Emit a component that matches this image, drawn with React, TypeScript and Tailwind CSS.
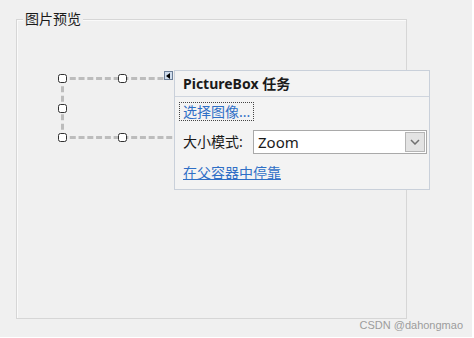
const cjk = { fontFamily: '"Noto Sans", "Noto Sans CJK SC", sans-serif' };

const Handle = ({ x, y }: { x: number; y: number }) => (
  <div
    className="absolute w-[9px] h-[9px] rounded-[2.5px] border-[1.5px] border-[#303030] bg-white"
    style={{ left: x - 4, top: y - 4 }}
  />
);

export default function App() {
  return (
    <div
      className="relative w-[474px] h-[338px] bg-[#f0f0f0] border-r-2 border-b border-white overflow-hidden text-[#1a1a1a]"
      style={cjk}
    >
      {/* group box */}
      <div className="ml-[16px] mt-[19px] w-[391px] h-[300px] border border-[#d6d6d6] shadow-[inset_1px_1px_0_#fafafa]">
        <div className="-mt-[10px] ml-[6px] w-fit px-[2px] bg-[#f0f0f0] text-[14px] leading-[18px]">
          图片预览
        </div>
      </div>

      {/* selected picturebox */}
      <div className="absolute left-[61px] top-[77px] w-[120px] h-[62px] border-[3px] border-dashed border-[#bcbcbc]" />
      <Handle x={62} y={78} />
      <Handle x={122} y={78} />
      <Handle x={62} y={108} />
      <Handle x={62} y={137} />
      <Handle x={122} y={137} />

      {/* smart tag glyph */}
      <div className="absolute left-[164px] top-[71px] w-[9px] h-[9px] border border-[#6b7d96] bg-[#cfdcec] flex items-center justify-center">
        <svg width="5" height="6" viewBox="0 0 5 6">
          <path d="M4 0 L0 3 L4 6 Z" fill="#000" />
        </svg>
      </div>

      {/* smart tag panel */}
      <div className="absolute left-[174px] top-[70px] w-[256px] h-[120px] border border-[#c9d0da] bg-[#f3f3f3] text-[14px]">
        <div className="h-[26px] border-b border-[#cfd5de] pl-[8px] flex items-center font-bold leading-none">
          PictureBox 任务
        </div>
        <div className="pl-[4px] pt-[5px]">
          <div className="w-fit h-[19px] px-[3px] border border-dotted border-[#444] flex items-center text-[#2f6fc6] leading-none">
            选择图像...
          </div>
          <div className="mt-[9px] flex items-center pl-[4px]">
            <span className="w-[70px] leading-none">大小模式:</span>
            <div className="w-[174px] h-[24px] border border-[#a9a9a9] bg-white flex items-center justify-between pl-[4px] pr-[1px]">
              <span className="text-[15px] leading-none">Zoom</span>
              <div className="w-[20px] h-[20px] border border-[#b5b5b5] bg-[#e3e3e3] flex items-center justify-center">
                <svg width="10" height="6" viewBox="0 0 10 6">
                  <path d="M1 1 L5 5 L9 1" fill="none" stroke="#707070" strokeWidth="1.5" />
                </svg>
              </div>
            </div>
          </div>
          <div className="mt-[12px] pl-[4px] text-[#2f6fc6] underline leading-none">
            在父容器中停靠
          </div>
        </div>
      </div>

      <div
        className="absolute right-[9px] bottom-[6px] text-[11px] leading-none text-[#9c9c9c]"
        style={{ fontFamily: '"Liberation Sans", Arial, sans-serif' }}
      >
        CSDN @dahongmao
      </div>
    </div>
  );
}
